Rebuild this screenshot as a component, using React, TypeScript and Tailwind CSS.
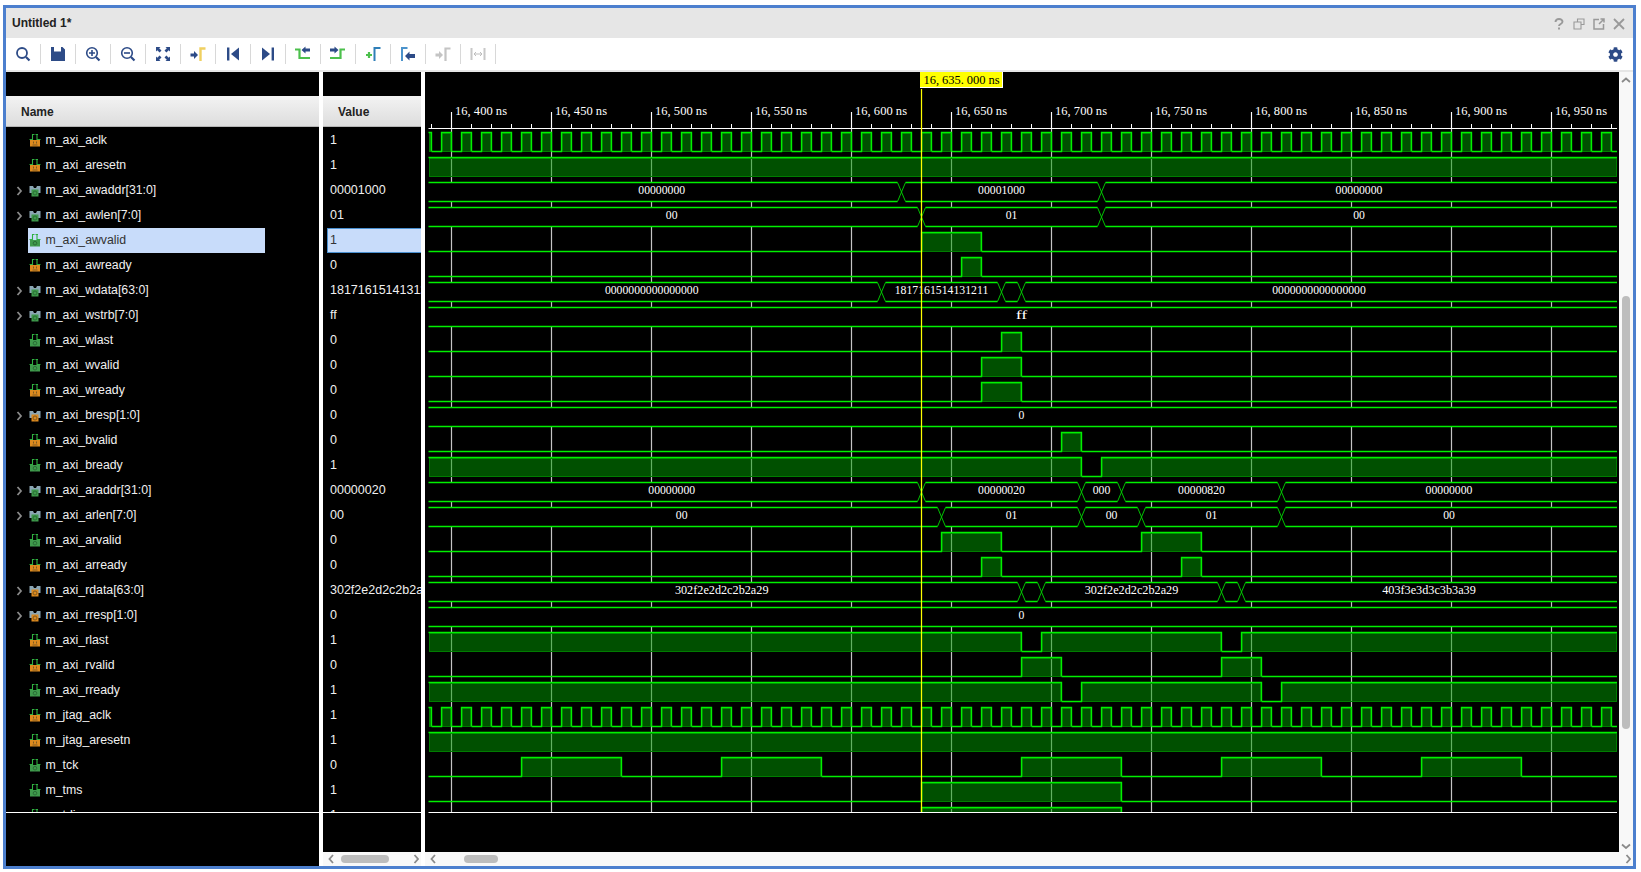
import React from 'react';
import { FaCog } from 'react-icons/fa';

const L = 428.5;
const R = 1617;
const top = (i: number) => 132.5 + 25 * i;
const bot = (i: number) => 151.5 + 25 * i;

type Scalar = { kind: 's'; highs: [number, number][] };
type Bus = { kind: 'b'; trans: number[]; labels: [string, number][] };

const clock: [number, number][] = [[L, 431.5]];
for (let k = 0; k <= 58; k++) clock.push([441.5 + 20 * k, 451.5 + 20 * k]);

const waves: (Scalar | Bus)[] = [
  { kind: 's', highs: clock },
  { kind: 's', highs: [[L, R]] },
  { kind: 'b', trans: [901.5, 1101.5], labels: [['00000000', 661.7], ['00001000', 1001.5], ['00000000', 1359]] },
  { kind: 'b', trans: [921.5, 1101.5], labels: [['00', 671.7], ['01', 1011.5], ['00', 1359]] },
  { kind: 's', highs: [[921.5, 981.5]] },
  { kind: 's', highs: [[961.5, 981.5]] },
  { kind: 'b', trans: [881.5, 1001.5, 1021.5], labels: [['0000000000000000', 651.7], ['1817161514131211', 941.5], ['0000000000000000', 1319]] },
  { kind: 'b', trans: [], labels: [['ff', 1021.5]] },
  { kind: 's', highs: [[1001.5, 1021.5]] },
  { kind: 's', highs: [[981.5, 1021.5]] },
  { kind: 's', highs: [[981.5, 1021.5]] },
  { kind: 'b', trans: [], labels: [['0', 1021.5]] },
  { kind: 's', highs: [[1061.5, 1081.5]] },
  { kind: 's', highs: [[L, 1081.5], [1101.5, R]] },
  { kind: 'b', trans: [921.5, 1081.5, 1121.5, 1281.5], labels: [['00000000', 671.7], ['00000020', 1001.5], ['000', 1101.5], ['00000820', 1201.5], ['00000000', 1449]] },
  { kind: 'b', trans: [941.5, 1081.5, 1141.5, 1281.5], labels: [['00', 681.7], ['01', 1011.5], ['00', 1111.5], ['01', 1211.5], ['00', 1449]] },
  { kind: 's', highs: [[941.5, 1001.5], [1141.5, 1201.5]] },
  { kind: 's', highs: [[981.5, 1001.5], [1181.5, 1201.5]] },
  { kind: 'b', trans: [1021.5, 1041.5, 1221.5, 1241.5], labels: [['302f2e2d2c2b2a29', 721.7], ['302f2e2d2c2b2a29', 1131.5], ['403f3e3d3c3b3a39', 1429]] },
  { kind: 'b', trans: [], labels: [['0', 1021.5]] },
  { kind: 's', highs: [[L, 1021.5], [1041.5, 1221.5], [1241.5, R]] },
  { kind: 's', highs: [[1021.5, 1061.5], [1221.5, 1261.5]] },
  { kind: 's', highs: [[L, 1061.5], [1081.5, 1261.5], [1281.5, R]] },
  { kind: 's', highs: clock },
  { kind: 's', highs: [[L, R]] },
  { kind: 's', highs: [[521.5, 621.5], [721.5, 821.5], [1021.5, 1121.5], [1221.5, 1321.5], [1421.5, 1521.5]] },
  { kind: 's', highs: [[921.5, 1121.5]] },
  { kind: 's', highs: [[921.5, 1121.5]] },
];

type Row = { name: string; value: string; bus?: boolean; out?: boolean; sel?: boolean };
const rows: Row[] = [
  { name: 'm_axi_aclk', value: '1', out: true },
  { name: 'm_axi_aresetn', value: '1', out: true },
  { name: 'm_axi_awaddr[31:0]', value: '00001000', bus: true },
  { name: 'm_axi_awlen[7:0]', value: '01', bus: true },
  { name: 'm_axi_awvalid', value: '1', sel: true },
  { name: 'm_axi_awready', value: '0', out: true },
  { name: 'm_axi_wdata[63:0]', value: '1817161514131211', bus: true },
  { name: 'm_axi_wstrb[7:0]', value: 'ff', bus: true },
  { name: 'm_axi_wlast', value: '0' },
  { name: 'm_axi_wvalid', value: '0' },
  { name: 'm_axi_wready', value: '0', out: true },
  { name: 'm_axi_bresp[1:0]', value: '0', bus: true, out: true },
  { name: 'm_axi_bvalid', value: '0', out: true },
  { name: 'm_axi_bready', value: '1' },
  { name: 'm_axi_araddr[31:0]', value: '00000020', bus: true },
  { name: 'm_axi_arlen[7:0]', value: '00', bus: true },
  { name: 'm_axi_arvalid', value: '0' },
  { name: 'm_axi_arready', value: '0', out: true },
  { name: 'm_axi_rdata[63:0]', value: '302f2e2d2c2b2a29', bus: true, out: true },
  { name: 'm_axi_rresp[1:0]', value: '0', bus: true, out: true },
  { name: 'm_axi_rlast', value: '1', out: true },
  { name: 'm_axi_rvalid', value: '0', out: true },
  { name: 'm_axi_rready', value: '1' },
  { name: 'm_jtag_aclk', value: '1', out: true },
  { name: 'm_jtag_aresetn', value: '1', out: true },
  { name: 'm_tck', value: '0' },
  { name: 'm_tms', value: '1' },
  { name: 'm_tdi', value: '1' },
];

function scalarPath(t: number, b: number, highs: [number, number][]) {
  let d = '';
  let cur = L;
  for (const [a, e] of highs) {
    if (a > L) {
      d += `M${cur} ${b}L${a} ${b}L${a} ${t}`;
    } else {
      d += `M${a} ${t}`;
    }
    d += `L${e} ${t}`;
    if (e < R) d += `L${e} ${b}`;
    cur = e;
  }
  if (cur < R) d += `M${cur} ${b}L${R} ${b}`;
  return d;
}

function busLines(t: number, b: number, trans: number[]) {
  const pts = [L, ...trans, R];
  let d = '';
  for (let i = 0; i < pts.length - 1; i++) {
    const s = i === 0 ? pts[i] : pts[i] + 4;
    const e = i === pts.length - 2 ? pts[i + 1] : pts[i + 1] - 4;
    d += `M${s} ${t}L${e} ${t}M${s} ${b}L${e} ${b}`;
  }
  return d;
}

const SERIF = '"Liberation Serif", serif';

function WaveLabel({ x, y, text }: { x: number; y: number; text: string }) {
  return (
    <text x={x} y={y} textAnchor="middle" fill="#ffffff" fontFamily={SERIF} fontSize={12.5} textLength={text.length * 5.85} lengthAdjust="spacingAndGlyphs">
      {text}
    </text>
  );
}

function WaveCanvas() {
  const majors = Array.from({ length: 12 }, (_, k) => 451.5 + 100 * k);
  const minors = Array.from({ length: 60 }, (_, k) => 431.5 + 20 * k).filter((x) => x < R);
  return (
    <svg width={1194} height={780} viewBox="425 72 1194 780" className="block shrink-0 bg-black">
      <defs>
        <clipPath id="waveclip">
          <rect x={425} y={129} width={1194} height={683} />
        </clipPath>
      </defs>
      {majors.map((x) => (
        <path key={x} d={`M${x} 112V812`} stroke="#c4c4c4" strokeWidth={1.2} />
      ))}
      {majors.map((x, k) => (
        <path key={k} d={`M${x} 112V128`} stroke="#ffffff" shapeRendering="crispEdges" />
      ))}
      {minors.map((x) => (
        <path key={x} d={`M${x} 124V128`} stroke="#ffffff" shapeRendering="crispEdges" />
      ))}
      <path d={`M${L} 128.5H${R}`} stroke="#ffffff" strokeWidth={1.2} />
      {majors.map((x, k) => (
        <text key={k} x={x + 3.5} y={114.5} fill="#ffffff" fontFamily={SERIF} fontSize={12.5} textLength={52} lengthAdjust="spacing" xmlSpace="preserve">
          {`16, ${400 + 50 * k} ns`}
        </text>
      ))}
      <g clipPath="url(#waveclip)">
        {waves.map((w, i) => {
          const t = top(i);
          const b = bot(i);
          if (w.kind === 's') {
            return (
              <g key={i}>
                {w.highs.map(([a, e], j) => (
                  <rect key={j} x={a === L ? 429.5 : a + 1} y={t + 1} width={(e === R ? 1616 : e - 1) - (a === L ? 429.5 : a + 1)} height={b - t - 1} fill="#00a000" fillOpacity={0.5} stroke="#007c00" shapeRendering="crispEdges" />
                ))}
                <path d={scalarPath(t, b, w.highs)} fill="none" stroke="#00f000" strokeWidth={1.35} />
              </g>
            );
          }
          return (
            <g key={i}>
              <rect x={L} y={t} width={R - L} height={b - t} fill="#000000" />
              <path d={busLines(t, b, w.trans)} fill="none" stroke="#00f000" strokeWidth={1.35} />
              {w.trans.map((x) => (
                <path key={x} d={`M${x - 4} ${t}L${x + 4} ${b}M${x - 4} ${b}L${x + 4} ${t}`} fill="none" stroke="#00d800" strokeWidth={0.9} />
              ))}
              {w.labels.map(([text, cx], j) => (
                <WaveLabel key={j} x={cx} y={t + 11} text={text} />
              ))}
            </g>
          );
        })}
      </g>
      <path d={`M${L} 812.5H${R}`} stroke="#ffffff" strokeWidth={1.2} />
      <path d="M921.5 89V812" stroke="#ffff00" strokeWidth={1.25} />
      <rect x={920} y={72} width={83} height={16} fill="#ffffff" />
      <rect x={920} y={72} width={82} height={15} fill="#ffff00" />
      <text x={923.5} y={83.5} fill="#000000" fontFamily={SERIF} fontSize={12.5} textLength={76} lengthAdjust="spacing" xmlSpace="preserve">
        16, 635. 000 ns
      </text>
    </svg>
  );
}

function SignalIcon({ bus, out }: { bus?: boolean; out?: boolean }) {
  const body = out ? '#dd8a1e' : '#3f9a4c';
  const mark = out ? '#7e5a22' : '#2a6e36';
  if (bus) {
    return (
      <svg width={12} height={12} viewBox="0 0 12 12" className="shrink-0">
        <path d="M0.5 1H4L5 3H7L8 1H11.5V8H0.5Z" fill="#8ba6b4" />
        <rect x={2.5} y={4.5} width={7} height={7} fill={body} />
        <circle cx={6} cy={8} r={2} fill="none" stroke={mark} strokeWidth={1} />
      </svg>
    );
  }
  return (
    <svg width={12} height={13} viewBox="0 0 12 13" className="shrink-0">
      <path d="M0.5 5.5H3.5V0.5H5.5M6.5 0.5H9M8 0.5V5.5H11.5" fill="none" stroke="#2fb040" strokeWidth={1.1} />
      <rect x={1} y={6} width={10} height={6.5} fill={body} />
      {out ? (
        <path d="M4.5 7.5V9.5M7.5 7.5V9.5M3.5 11H8.5" stroke={mark} strokeWidth={1} />
      ) : (
        <circle cx={6} cy={9.2} r={1.8} fill="none" stroke={mark} strokeWidth={1} />
      )}
    </svg>
  );
}

const Arrow = ({ dir, className }: { dir: 'l' | 'r' | 'u' | 'd'; className?: string }) => {
  const d = { l: 'M5 1L1.5 5L5 9', r: 'M1.5 1L5 5L1.5 9', u: 'M1 5L5 1.5L9 5', d: 'M1 1.5L5 5L9 1.5' }[dir];
  const horizontal = dir === 'l' || dir === 'r';
  return (
    <svg width={horizontal ? 6.5 : 10} height={horizontal ? 10 : 6.5} viewBox={horizontal ? '0 0 6.5 10' : '0 0 10 6.5'} className={`shrink-0 ${className ?? ''}`}>
      <path d={d} fill="none" stroke="#8a8a8a" strokeWidth={1.8} />
    </svg>
  );
};

const B = '#2d4b87';
const toolbarIcons: React.ReactNode[] = [
  <g key="a"><circle cx={7} cy={7} r={5} fill="none" stroke={B} strokeWidth={1.8} /><path d="M11 11L14.5 14.5" stroke={B} strokeWidth={2.2} /></g>,
  <path key="b" d="M1 1H4V5.5H11V1H12.5L15 3.5V15H1Z" fill={B} />,
  <g key="c"><circle cx={7} cy={7} r={5.3} fill="none" stroke={B} strokeWidth={1.6} /><path d="M7 4V10M4 7H10" stroke={B} strokeWidth={1.6} /><path d="M11 11L14.5 14.5" stroke={B} strokeWidth={2.2} /></g>,
  <g key="d"><circle cx={7} cy={7} r={5.3} fill="none" stroke={B} strokeWidth={1.6} /><path d="M4 7H10" stroke={B} strokeWidth={1.6} /><path d="M11 11L14.5 14.5" stroke={B} strokeWidth={2.2} /></g>,
  <path key="e" d="M1 1H5.5L4.2 2.3L6.5 4.6L4.6 6.5L2.3 4.2L1 5.5ZM15 1V5.5L13.7 4.2L11.4 6.5L9.5 4.6L11.8 2.3L10.5 1ZM1 15V10.5L2.3 11.8L4.6 9.5L6.5 11.4L4.2 13.7L5.5 15ZM15 15H10.5L11.8 13.7L9.5 11.4L11.4 9.5L13.7 11.8L15 10.5Z" fill={B} />,
  <g key="f"><path d="M0.5 7.5H4V5L8 9L4 13V10.5H0.5Z" fill={B} /><path d="M10.5 15V2.5H15.5" fill="none" stroke="#f0d060" strokeWidth={2.4} /></g>,
  <g key="g"><rect x={2} y={1.5} width={2.4} height={13} fill={B} /><path d="M14 1.5V14.5L6 8Z" fill={B} /></g>,
  <g key="h"><rect x={11.6} y={1.5} width={2.4} height={13} fill={B} /><path d="M2 1.5V14.5L10 8Z" fill={B} /></g>,
  <g key="i"><path d="M0 3.5H4.5V12H15" fill="none" stroke="#4cc04c" strokeWidth={2.2} /><path d="M6.5 4L10.5 0.5V2.5H15V5.5H10.5V7.5Z" fill={B} /></g>,
  <g key="j"><path d="M0 12H10.5V3.5H15" fill="none" stroke="#4cc04c" strokeWidth={2.2} /><path d="M8.5 4L4.5 0.5V2.5H0V5.5H4.5V7.5Z" fill={B} /></g>,
  <g key="k"><path d="M1 9H7M4 6V12" stroke="#4cc04c" strokeWidth={2.2} /><path d="M9.5 15V2H15.5" fill="none" stroke="#2f7fb8" strokeWidth={2} /></g>,
  <g key="l"><path d="M2 15V2H7.5" fill="none" stroke="#4c93cc" strokeWidth={2} /><path d="M5 10L9.5 5.5V8H15V12H9.5V14.5Z" fill={B} /></g>,
  <g key="m"><path d="M0.5 7.5H4V5L8 9L4 13V10.5H0.5Z" fill="#c4c4c4" /><path d="M10.5 15V2.5H15.5" fill="none" stroke="#c4c4c4" strokeWidth={2.2} /></g>,
  <g key="n"><path d="M1.5 2V14M14.5 2V14" stroke="#c8c8c8" strokeWidth={2} /><path d="M4 8H12M6 6L4 8L6 10M10 6L12 8L10 10" fill="none" stroke="#bdbdbd" strokeWidth={1} /></g>,
];

export default function App() {
  return (
    <div className="w-[1641px] h-[872px] bg-white pt-[5px] pl-[3px] overflow-hidden font-['Liberation_Sans',sans-serif]">
      <div className="w-[1633px] h-[864px] border-[3px] border-[#4c7fce] flex flex-col">
        <div className="h-[30px] shrink-0 bg-[#e6e6e6] flex items-center pl-[6px] pr-[8px]">
          <span className="text-[12px] font-bold text-[#222222]">Untitled 1*</span>
          <div className="ml-auto flex items-center gap-[8px] mt-[2px]">
            <svg width={12} height={12} viewBox="0 0 12 12"><path d="M2.5 4C2.5 2 4 1 6 1S9.5 2 9.5 3.8C9.5 6 6 6 6 8M6 9.5V11.5" fill="none" stroke="#999999" strokeWidth={1.9} /></svg>
            <svg width={12} height={12} viewBox="0 0 12 12"><path d="M4.5 3.5V1H11V6.5H8M1 4H8V11H1Z" fill="none" stroke="#999999" strokeWidth={1.1} /></svg>
            <svg width={12} height={12} viewBox="0 0 12 12"><path d="M6 1.5H1V11H10.5V6M6 6L11 1M7.5 1H11V4.5" fill="none" stroke="#999999" strokeWidth={1.5} /></svg>
            <svg width={12} height={12} viewBox="0 0 12 12"><path d="M1 1L11 11M11 1L1 11" fill="none" stroke="#999999" strokeWidth={1.8} /></svg>
          </div>
        </div>
        <div className="h-[34px] shrink-0 bg-white border-b-2 border-[#e6e6e6] flex items-center">
          {toolbarIcons.map((ic, i) => (
            <div key={i} className="w-[35px] h-[20px] border-r border-[#d8d8d8] flex items-center justify-center">
              <svg width={16} height={16} viewBox="0 0 16 16">{ic}</svg>
            </div>
          ))}
          <FaCog className="ml-auto mr-[10px] text-[#2d4b87]" size={15} />
        </div>
        <div className="flex-1 flex gap-[4px] bg-white min-h-0">
          <div className="w-[313px] shrink-0 bg-black flex flex-col">
            <div className="h-[24px] shrink-0" />
            <div className="h-[31px] shrink-0 bg-linear-to-b from-[#f3f3f3] to-[#dddddd] border-b border-[#b4b4b4] flex items-center pl-[15px] pt-[2px] text-[12px] font-bold text-[#222222]">Name</div>
            <div className="h-[685px] shrink-0 overflow-hidden pt-[1px]">
              {rows.map((r) => (
                <div key={r.name} className="h-[25px] flex items-center pl-[10px]">
                  <div className="w-[12px] h-full flex items-center">
                    {r.bus && <Arrow dir="r" />}
                  </div>
                  <div className={`w-[237px] h-full flex items-center pl-[1px] ${r.sel ? 'bg-[#c8dcfa] text-[#333333]' : 'text-[#f0f0f0]'}`}>
                    <SignalIcon bus={r.bus} out={r.out} />
                    <span className="ml-[4.5px] text-[12.3px] whitespace-nowrap">{r.name}</span>
                  </div>
                </div>
              ))}
            </div>
            <div className="flex-1 border-t border-white" />
          </div>
          <div className="w-[98px] shrink-0 bg-black flex flex-col">
            <div className="h-[24px] shrink-0" />
            <div className="h-[31px] shrink-0 bg-linear-to-b from-[#f3f3f3] to-[#dddddd] border-b border-[#b4b4b4] flex items-center pl-[15px] pt-[2px] text-[12px] font-bold text-[#222222]">Value</div>
            <div className="h-[685px] shrink-0 overflow-hidden pt-[1px]">
              {rows.map((r) => (
                <div key={r.name} className="h-[25px] pl-[4px]">
                  <div className={`h-full flex items-center overflow-hidden whitespace-nowrap text-[12.5px] ${r.sel ? 'bg-[#c8dcfa] text-[#333333] border border-r-0 border-[#4a90d0] pl-[2px]' : 'text-[#f0f0f0] pl-[3px]'}`}>
                    {r.value}
                  </div>
                </div>
              ))}
            </div>
            <div className="flex-1 border-t border-white" />
            <div className="h-[14px] shrink-0 bg-[#f8f8f8] flex items-center pl-[5px]">
              <Arrow dir="l" />
              <div className="ml-[6px] w-[48px] h-[8px] rounded-full bg-[#bdbdbd]" />
              <Arrow dir="r" className="ml-[24px]" />
            </div>
          </div>
          <div className="flex-1 min-w-0 flex flex-col">
            <div className="flex-1 flex min-h-0">
              <WaveCanvas />
              <div className="w-[14px] shrink-0 bg-[#f8f8f8] flex flex-col items-center pt-[5px] pb-[3px]">
                <Arrow dir="u" />
                <div className="mt-[212px] h-[433px] w-[8px] rounded-full bg-[#bdbdbd]" />
                <Arrow dir="d" className="mt-auto" />
              </div>
            </div>
            <div className="h-[14px] shrink-0 bg-[#f8f8f8] flex items-center pl-[5px]">
              <Arrow dir="l" />
              <div className="ml-[27px] w-[34px] h-[8px] rounded-full bg-[#bdbdbd]" />
              <Arrow dir="r" className="ml-auto mr-[2px]" />
            </div>
          </div>
        </div>
      </div>
    </div>
  );
}
